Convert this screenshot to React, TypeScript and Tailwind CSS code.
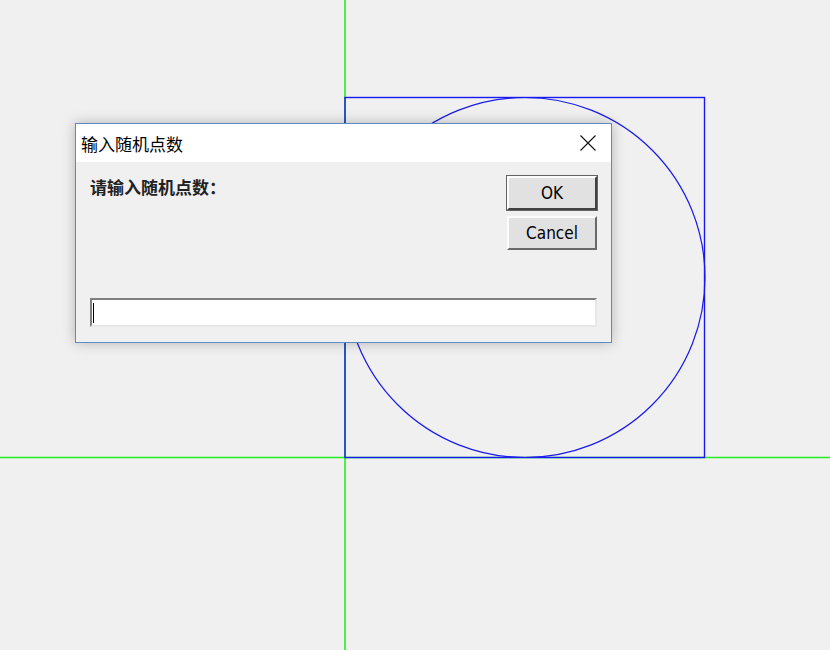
import React from "react";

export default function App() {
  return (
    <div className="relative w-[830px] h-[650px] overflow-hidden bg-[#f0f0f0]" style={{ fontFamily: '"Noto Sans CJK SC", "Liberation Sans", sans-serif' }}>
      <svg className="absolute left-0 top-0" width="830" height="650" viewBox="0 0 830 650">
        <line x1="345" y1="0" x2="345" y2="650" stroke="#22ee22" strokeWidth="1.6" />
        <line x1="0" y1="457.5" x2="830" y2="457.5" stroke="#22ee22" strokeWidth="1.6" />
        <rect x="345" y="97.5" width="359.5" height="360" fill="none" stroke="#1a1aee" strokeWidth="1.4" />
        <circle cx="525" cy="277.5" r="180" fill="none" stroke="#1a1aee" strokeWidth="1.2" />
      </svg>

      <div className="absolute left-[75px] top-[123px] w-[537px] h-[220px] border border-[#5b8ac6] bg-[#f0f0f0] shadow-[0_0_12px_rgba(0,0,0,0.25)] flex flex-col">
        <div className="h-[38px] bg-white flex items-center justify-between pl-[5px] pr-[14px]">
          <span className="text-[17px] text-black leading-none">输入随机点数</span>
          <svg width="18" height="18" viewBox="0 0 18 18">
            <path d="M1.5 1.5 L16.5 16.5 M16.5 1.5 L1.5 16.5" stroke="#111" strokeWidth="1.1" fill="none" />
          </svg>
        </div>
        <div className="flex-1 relative px-[14px]">
          <div className="flex justify-between pt-[13px]">
            <span className="text-[17px] font-bold text-[#222] leading-none mt-[3px]">请输入随机点数：</span>
            <div className="flex flex-col gap-[6px] pt-[1px]">
              <button className="w-[90px] h-[34px] bg-[#e1e1e1] border-[2px] border-t-[#fcfcfc] border-l-[#fcfcfc] border-b-[#404040] border-r-[#404040] outline outline-1 outline-[#646464] text-[17px] text-black leading-none" style={{ fontFamily: '"DejaVu Sans Condensed", "Liberation Sans Narrow", sans-serif' }}>OK</button>
              <button className="w-[90px] h-[34px] bg-[#e1e1e1] border-[2px] border-t-[#fcfcfc] border-l-[#fcfcfc] border-b-[#696969] border-r-[#696969] text-[17px] text-black leading-none" style={{ fontFamily: '"Liberation Sans Narrow", "DejaVu Sans Condensed", sans-serif' }}>Cancel</button>
            </div>
          </div>
          <div className="absolute left-[14px] top-[136px] w-[507px] h-[29px] bg-white border-[2px] border-t-[#808080] border-l-[#808080] border-b-[#e8e8e8] border-r-[#e8e8e8] flex items-center pl-[1px]">
            <div className="w-[1px] h-[20px] bg-black" />
          </div>
        </div>
      </div>
    </div>
  );
}
